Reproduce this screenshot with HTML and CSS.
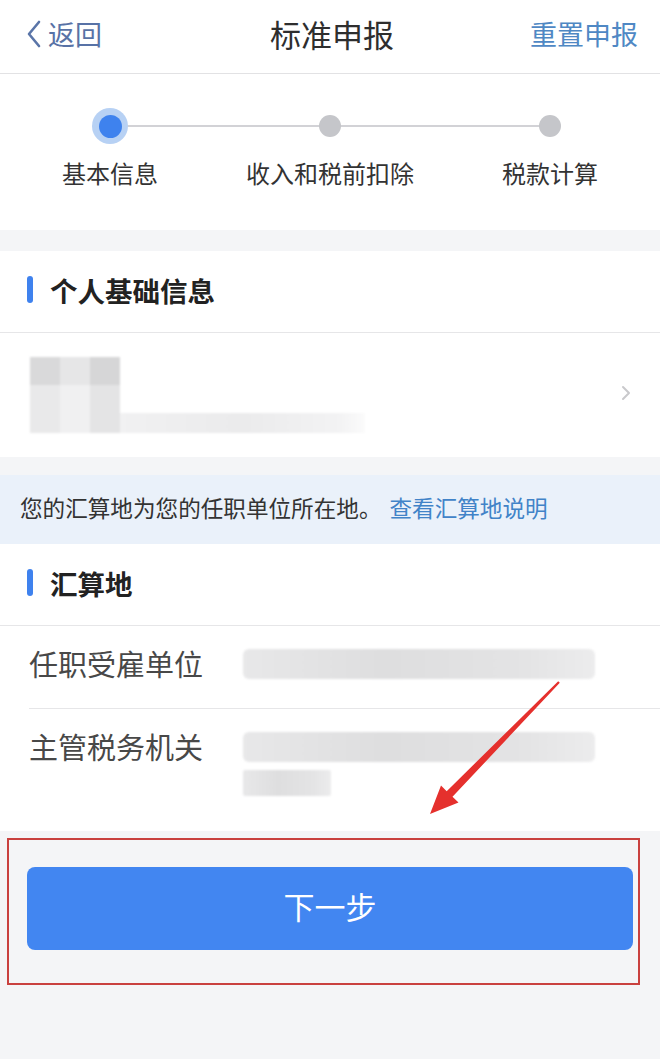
FILE: index.html
```html
<!DOCTYPE html>
<html lang="zh-CN">
<head>
<meta charset="utf-8">
<title>标准申报</title>
<link rel="stylesheet" href="styles.css">
</head>
<body>
<div class="page">
  <header class="nav">
    <a class="nav-back">
      <svg class="chev-left" width="16" height="28" viewBox="0 0 16 28"><path d="M13 2 L3 14 L13 26" fill="none" stroke="#5a75a8" stroke-width="2.6" stroke-linecap="round" stroke-linejoin="round"/></svg>
      <span>返回</span>
    </a>
    <h1 class="nav-title">标准申报</h1>
    <a class="nav-action">重置申报</a>
  </header>

  <section class="stepper">
    <div class="step step-active">
      <div class="dot-wrap"><span class="dot"></span></div>
      <div class="step-label">基本信息</div>
    </div>
    <div class="step">
      <div class="dot-wrap"><span class="dot"></span></div>
      <div class="step-label">收入和税前扣除</div>
    </div>
    <div class="step step-last">
      <div class="dot-wrap"><span class="dot"></span></div>
      <div class="step-label">税款计算</div>
    </div>
  </section>

  <section class="card card-first">
    <div class="card-head"><span class="bar"></span><span class="card-title">个人基础信息</span></div>
    <div class="person-row">
      <div class="redact-person">
        <div class="mosaic">
          <span class="m1"></span><span class="m2"></span><span class="m3"></span>
          <span class="m4"></span><span class="m5"></span><span class="m6"></span>
        </div>
        <div class="redact-strip"></div>
      </div>
      <svg class="chev-right" width="12" height="18" viewBox="0 0 12 18"><path d="M3 3 L9 9 L3 15" fill="none" stroke="#c9c9cc" stroke-width="2" stroke-linecap="round" stroke-linejoin="round"/></svg>
    </div>
  </section>

  <div class="notice">
    <span>您的汇算地为您的任职单位所在地。</span><a class="notice-link">查看汇算地说明</a>
  </div>

  <section class="card">
    <div class="card-head"><span class="bar"></span><span class="card-title">汇算地</span></div>
    <div class="field">
      <div class="field-label">任职受雇单位</div>
      <div class="field-value">
        <div class="redact-line r-long"></div>
      </div>
    </div>
    <div class="field field-tall">
      <div class="field-label">主管税务机关</div>
      <div class="field-value">
        <div class="redact-line r-long"></div>
        <div class="redact-line r-short"></div>
      </div>
    </div>
  </section>

  <div class="mark-box">
    <button class="next-btn">下一步</button>
  </div>

  <svg class="arrow" width="660" height="1059" viewBox="0 0 660 1059">
    <polygon points="559.8,682.8 452.5,796.8 458.5,802.6 430,814 441,785.4 446.7,791.2 558.2,681.2" fill="#e5302d"/>
  </svg>
</div>
</body>
</html>
```

FILE: styles.css
```css
* { box-sizing: border-box; }
html, body { margin: 0; padding: 0; }
body {
  background: #f4f5f7;
  font-family: "Noto Sans CJK SC", "Noto Sans", sans-serif;
  color: #333;
}
.page {
  position: relative;
  width: 660px;
  min-height: 1059px;
  background: #f4f5f7;
}

/* nav */
.nav {
  height: 74px;
  background: #fff;
  border-bottom: 1px solid #e2e2e4;
  display: grid;
  grid-template-columns: 1fr auto 1fr;
  align-items: center;
  padding: 0 22px 5px 26px;
}
.nav-back {
  display: flex;
  align-items: center;
  color: #5872a6;
  font-size: 27px;
  line-height: 36px;
}
.chev-left { margin-right: 6px; }
.nav-title {
  margin: 0;
  font-size: 31px;
  font-weight: 400;
  color: #2e2e2e;
  line-height: 40px;
}
.nav-action {
  justify-self: end;
  color: #4f88c4;
  font-size: 27px;
  line-height: 36px;
}

/* stepper */
.stepper {
  background: #fff;
  display: grid;
  grid-template-columns: repeat(3, 1fr);
  padding: 34px 0 40px;
  height: 156px;
}
.step {
  position: relative;
  display: flex;
  flex-direction: column;
  align-items: center;
}
.step::after {
  content: "";
  position: absolute;
  top: 17px;
  left: 50%;
  width: 100%;
  height: 2px;
  background: #d2d2d6;
}
.step-last::after { display: none; }
.dot-wrap {
  position: relative;
  z-index: 1;
  width: 36px;
  height: 36px;
  display: flex;
  align-items: center;
  justify-content: center;
}
.dot {
  width: 22px;
  height: 22px;
  border-radius: 50%;
  background: #c5c6ca;
}
.step-active .dot-wrap {
  border-radius: 50%;
  background: #b7d1f4;
}
.step-active .dot {
  width: 23px;
  height: 23px;
  background: #3e82ee;
}
.step-label {
  margin-top: 14px;
  font-size: 24px;
  line-height: 30px;
  color: #333;
  white-space: nowrap;
}

/* cards */
.card { background: #fff; }
.card-first { margin-top: 21px; }
.card-head {
  height: 82px;
  display: flex;
  align-items: center;
  padding-bottom: 4px;
  border-bottom: 1px solid #e6e6e8;
}
.bar {
  width: 6px;
  height: 27px;
  border-radius: 3px;
  background: #3f82ee;
  margin: 0 17px 0 27px;
}
.card-title {
  font-size: 27.5px;
  font-weight: 700;
  color: #222;
  line-height: 36px;
}

.person-row {
  height: 124px;
  display: flex;
  align-items: center;
  justify-content: space-between;
  padding: 0 28px 0 30px;
}
.redact-person {
  display: flex;
  align-items: flex-end;
  filter: blur(1.2px);
}
.mosaic {
  width: 90px;
  height: 76px;
  display: grid;
  grid-template-columns: repeat(3, 1fr);
  grid-template-rows: 28px 1fr;
}
.m1 { background: #d9d9da; }
.m2 { background: #e6e6e7; }
.m3 { background: #d6d6d7; }
.m4 { background: #e9e9ea; }
.m5 { background: #f0f0f1; }
.m6 { background: #e4e4e5; }
.redact-strip {
  width: 245px;
  height: 20px;
  background: linear-gradient(90deg, #f1f1f2, #ebebec 50%, #f3f3f4 90%, #fbfbfb);
}
.chev-right { margin-top: -4px; }

/* notice */
.notice {
  margin-top: 18px;
  height: 69px;
  background: #eaf1fa;
  display: flex;
  align-items: center;
  padding: 0 20px 4px;
  font-size: 22.6px;
  color: #333;
  white-space: nowrap;
}
.notice-link {
  margin-left: 8px;
  color: #4183c8;
}

/* fields */
.field {
  display: flex;
  padding: 19px 0 27px 0;
  margin-left: 29px;
  border-bottom: 1px solid #e6e6e8;
}
.field-tall {
  border-bottom: none;
  padding-bottom: 35px;
}
.field-label {
  width: 214px;
  flex: none;
  font-size: 29px;
  line-height: 36px;
  color: #484848;
}
.field-value {
  flex: 1;
  padding-top: 4px;
  filter: blur(1.2px);
}
.redact-line {
  height: 30px;
  background: linear-gradient(90deg, #e8e8e9, #dededf 40%, #e4e4e5 80%, #ececed);
  border-radius: 6px;
}
.r-long { width: 352px; }
.r-short {
  width: 88px;
  height: 26px;
  margin-top: 8px;
  border-radius: 2px;
}

/* button + annotation box */
.mark-box {
  margin: 7px 0 0 7px;
  width: 633px;
  border: 2px solid #c9413f;
  padding: 27px 5px 33px 18px;
}
.next-btn {
  display: block;
  width: 606px;
  height: 83px;
  border: none;
  border-radius: 8px;
  padding: 0 0 7px;
  background: #4286f1;
  color: #fff;
  font-family: "Noto Sans CJK SC", "Noto Sans", sans-serif;
  font-size: 31px;
}

.arrow {
  position: absolute;
  left: 0;
  top: 0;
  pointer-events: none;
}
```
